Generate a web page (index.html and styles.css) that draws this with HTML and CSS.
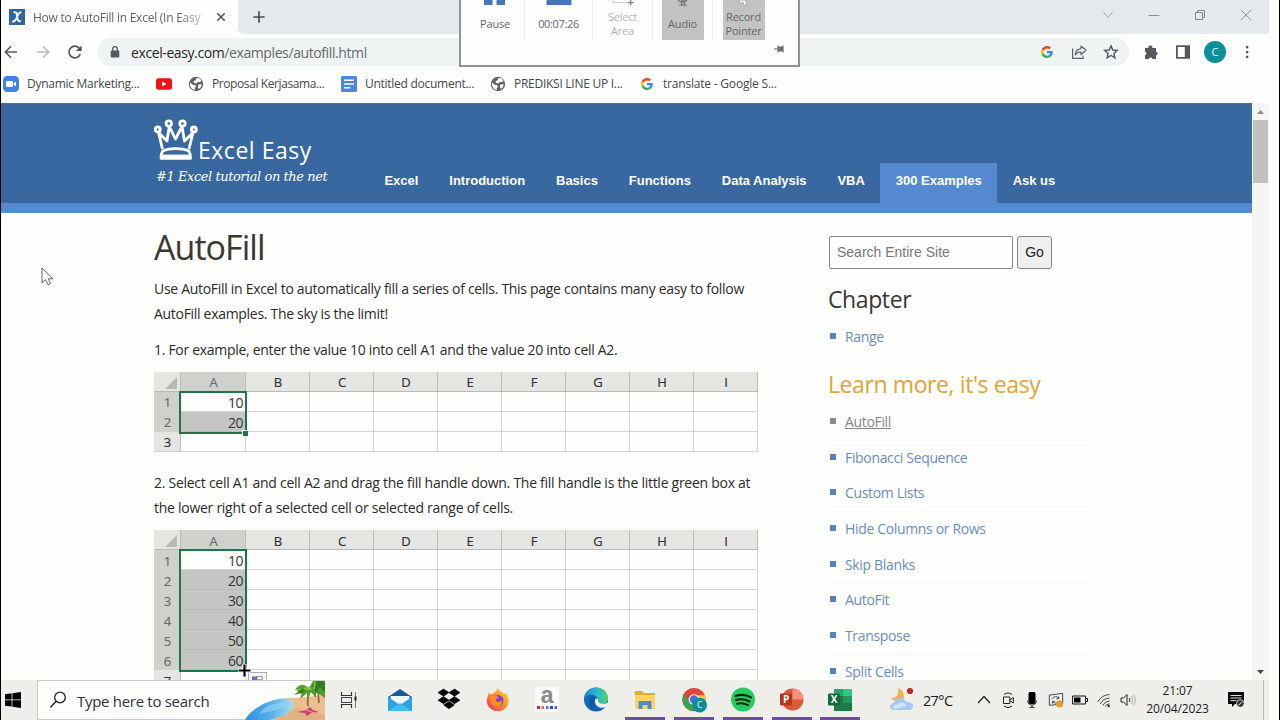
FILE: index.html
```html
<!DOCTYPE html>
<html lang="en">
<head>
<meta charset="utf-8">
<title>How to AutoFill in Excel</title>
<link rel="stylesheet" href="styles.css">
</head>
<body>
<svg width="0" height="0" class="defs">
  <symbol id="google" viewBox="0 0 48 48">
    <path fill="#ea4335" d="M24 9.5c3.5 0 6.700 1.200 9.200 3.600l6.900-6.900C35.900 2.400 30.500 0 24 0 14.600 0 6.500 5.400 2.600 13.200l8 6.200C12.400 13.700 17.700 9.500 24 9.500z"/>
    <path fill="#4285f4" d="M47 24.500c0-1.600-.2-3.100-.4-4.500H24v9h12.900c-.6 3-2.300 5.500-4.800 7.200l7.700 6C44.400 38 47 32 47 24.500z"/>
    <path fill="#fbbc05" d="M10.500 28.600A14.500 14.500 0 0 1 10.500 19.400l-8-6.200a24 24 0 0 0 0 21.600z"/>
    <path fill="#34a853" d="M24 48c6.500 0 11.900-2.100 15.900-5.800l-7.700-6c-2.200 1.500-4.900 2.300-8.200 2.300-6.300 0-11.600-4.200-13.500-9.900l-8 6.200C6.500 42.600 14.600 48 24 48z"/>
  </symbol>
  <symbol id="globe" viewBox="0 0 16 16">
    <circle cx="8" cy="8" r="7.200" fill="#5f6368"/>
    <path fill="#fdfdfb" d="M2 6.500l3 2.200 2.300.5.7 1.600-1.300 1.500.3 2L4 12.800 2 10zM8.500 2l3 .3 2 2.500-1.400 1.200L9.800 6 8.500 7.600 6.200 7 5.400 5.200l2.200-.9zM10 8.700l3.600-.8-.5 3-2.300 2.200-.8-1.700z"/>
  </symbol>
</svg>
<div class="screen">
  <header class="tabstrip">
    <div class="tab">
      <svg class="favicon" viewBox="0 0 16 16"><rect width="16" height="16" fill="#31669f"/><path d="M4.500 3.600c3-1.500 3.200.5 3.500 3.400.3 3.900 1 6 3.700 5M12.500 3.600c-2-1-3.500 2-4.500 4.400S5.300 13.500 3 12.300" fill="none" stroke="#fff" stroke-width="1.900"/></svg>
      <span class="tab-title">How to AutoFill in Excel (In Easy</span>
      <svg class="tab-close" viewBox="0 0 10 10"><path d="M1.300 1.300l7.400 7.400M8.700 1.300L1.300 8.700" stroke="#505357" stroke-width="1.600"/></svg>
    </div>
    <div class="tab-rest">
      <svg class="plus" viewBox="0 0 12 12"><path d="M6 .3v11.400M.3 6h11.400" stroke="#4b4e51" stroke-width="1.700"/></svg>
      <div class="window-buttons">
        <svg viewBox="0 0 12 12"><path d="M1.500 3.500L6 8.500l4.500-5" fill="none" stroke="#999c9e" stroke-width=".9"/></svg>
        <svg viewBox="0 0 12 12"><path d="M.5 6.500h11" stroke="#8d9092"/></svg>
        <svg viewBox="0 0 12 12"><path d="M1.500 3.500h7v7h-7zM3.500 3.500v-2h7v7h-2" fill="none" stroke="#85888a"/></svg>
        <svg viewBox="0 0 12 12"><path d="M.8 .8l10.400 10.400M11.200 .8L.8 11.200" stroke="#8c8f91" stroke-width=".9"/></svg>
      </div>
    </div>
  </header>
  <div class="toolbar">
    <div class="nav-buttons">
      <svg viewBox="0 0 16 16"><path d="M14 8H2.500M8 2.300L2.300 8 8 13.700" fill="none" stroke="#55585b" stroke-width="1.600"/></svg>
      <svg viewBox="0 0 16 16"><path d="M2 8h11.500M8 2.300L13.700 8 8 13.700" fill="none" stroke="#bcbebf" stroke-width="1.500"/></svg>
      <svg viewBox="0 0 16 16"><path d="M13.300 10A5.800 5.800 0 1 1 12.400 4.400L14 6" fill="none" stroke="#505357" stroke-width="1.700"/><path d="M14.600 1.500v5.600H9z" fill="#505357"/></svg>
    </div>
    <div class="omnibox">
      <svg class="lock" viewBox="0 0 10 12"><rect x=".7" y="4.600" width="8.600" height="7" rx="1" fill="#55585c"/><path d="M2.700 5V3a2.300 2.300 0 0 1 4.600 0v2" fill="none" stroke="#55585c" stroke-width="1.300"/></svg>
      <span class="url"><b>excel-easy.com</b>/examples/autofill.html</span>
      <div class="omni-icons">
        <svg viewBox="0 0 16 16"><use href="#google" x="2" y="2" width="12" height="12"/></svg>
        <svg viewBox="0 0 16 16"><path d="M1.600 4.500v9.900h10.500v-3" fill="none" stroke="#606366" stroke-width="1.200"/><path d="M10 2l5 4.300-5 4.200V8C7.500 7.900 5.600 8.800 4.200 11 4.600 7.300 6.800 5 10 4.600z" fill="none" stroke="#606366" stroke-width="1.200" stroke-linejoin="round"/></svg>
        <svg viewBox="0 0 16 16"><path d="M8 1.900l1.800 4.100 4.500.4-3.400 3 1 4.400L8 11.500l-3.900 2.300 1-4.400-3.400-3 4.500-.4z" fill="none" stroke="#55585c" stroke-width="1.400"/></svg>
      </div>
    </div>
    <div class="tool-icons">
      <svg viewBox="0 0 16 16"><path d="M2 4h3.400a2 2 0 1 1 3.900 0H13v3.600a2 2 0 0 1 0 3.900V15H9.500a2 2 0 0 0-3.800 0H2v-3.700a2 2 0 0 0 0-3.800z" fill="#55585c"/></svg>
      <svg viewBox="0 0 16 16"><path d="M1.900 2.200h12.200v11.600H1.900z" fill="#fff" stroke="#55585c" stroke-width="1.800"/><path d="M9.800 2h4.500v12H9.800z" fill="#55585c"/></svg>
      <span class="avatar">C</span>
      <svg viewBox="0 0 16 16"><path d="M7 2h2.300v2.300H7zM7 6.900h2.300v2.300H7zM7 11.700h2.300V14H7z" fill="#55585c"/></svg>
    </div>
  </div>
  <div class="bookmarks">
    <div class="bm bm1"><svg viewBox="0 0 16 16"><rect width="16" height="16" rx="4.500" fill="#3e82e4"/><rect x="3" y="5" width="7" height="6" rx="1.300" fill="#fff"/><path d="M10.600 7.300L13 5.500v5l-2.400-1.700z" fill="#fff"/></svg><span>Dynamic Marketing...</span></div>
    <div class="bm bm2"><svg viewBox="0 0 16 16"><rect y="2.300" width="16" height="11.500" rx="2.500" fill="#ec1414"/><path d="M6.200 5.500v5l4.300-2.500z" fill="#fff"/></svg></div>
    <div class="bm bm3"><svg><use href="#globe"/></svg><span>Proposal Kerjasama...</span></div>
    <div class="bm bm4"><svg viewBox="0 0 16 16"><rect width="16" height="16" rx="1.500" fill="#4a86dc"/><path d="M3 4.300h10M3 8h10M3 11.700h6.500" stroke="#fff" stroke-width="1.600"/></svg><span>Untitled document...</span></div>
    <div class="bm bm5"><svg><use href="#globe"/></svg><span>PREDIKSI LINE UP I...</span></div>
    <div class="bm bm6"><svg viewBox="0 0 16 16"><use href="#google" x="2" y="2" width="12" height="12"/></svg><span>translate - Google S...</span></div>
  </div>
  <div class="viewport">
    <main class="page">
      <div class="masthead">
        <div class="brand">
          <div class="brand-row">
            <svg class="crown" viewBox="0 0 44 42"><g fill="none" stroke="#fff" stroke-width="2.800" stroke-linejoin="round"><path d="M8.500 30L4.500 13.500l8.500 8.500 2.300-14.500L21.500 20 28 7.500 30.500 22l8.500-8.500L35 30"/><circle cx="3.800" cy="10.500" r="2.500"/><circle cx="14.800" cy="4.600" r="2.700"/><circle cx="28.500" cy="4.600" r="2.700"/><circle cx="39.800" cy="10.500" r="2.500"/><path d="M7 39.300h29.500c.3-3-.5-5.500-1.800-7.600-7-2.900-19-2.900-25.900 0C7.500 33.800 6.700 36.500 7 39.300z"/></g><path d="M7 35.600h29.500V40H7z" fill="#fff"/></svg>
            <span class="brand-name">Excel Easy</span>
          </div>
          <div class="tagline">#1 Excel tutorial on the net</div>
        </div>
        <nav class="menu"><a>Excel</a><a>Introduction</a><a>Basics</a><a>Functions</a><a>Data Analysis</a><a>VBA</a><a class="active">300 Examples</a><a>Ask us</a></nav>
      </div>
      <div class="columns">
        <article>
          <h1>AutoFill</h1>
          <p class="intro">Use AutoFill in Excel to automatically fill a series of cells. This page contains many easy to follow<br>AutoFill examples. The sky is the limit!</p>
          <p>1. For example, enter the value 10 into cell A1 and the value 20 into cell A2.</p>
          <div class="sheet" data-rows="3" data-filled="2"></div>
          <p class="after-sheet">2. Select cell A1 and cell A2 and drag the fill handle down. The fill handle is the little green box at<br>the lower right of a selected cell or selected range of cells.</p>
          <div class="sheet" data-rows="7" data-filled="6"></div>
        </article>
        <aside>
          <div class="search"><div class="search-input">Search Entire Site</div><div class="search-go">Go</div></div>
          <h2>Chapter</h2>
          <ul><li>Range</li></ul>
          <h2 class="orange">Learn more, it's easy</h2>
          <ul><li class="current"><u>AutoFill</u></li><li>Fibonacci Sequence</li><li>Custom Lists</li><li>Hide Columns or Rows</li><li>Skip Blanks</li><li>AutoFit</li><li>Transpose</li><li>Split Cells</li></ul>
        </aside>
      </div>
    </main>
    <div class="scrollbar">
      <svg viewBox="0 0 16 17"><path d="M4.500 11L8 7l3.500 4z" fill="#8a8a8a"/></svg>
      <div class="thumb"></div>
      <svg class="down" viewBox="0 0 16 17"><path d="M4.500 7L8 11l3.500-4z" fill="#444"/></svg>
    </div>
  </div>
  <footer class="taskbar">
    <div class="start"><svg viewBox="0 0 16 16"><path d="M0 2.300L6.600 1.300v6.200H0zM7.400 1.200L16 0v7.500H7.400zM0 8.300h6.600v6.300L0 13.700zM7.400 8.300H16V16l-8.600-1.200z" fill="#000"/></svg></div>
    <div class="task-search">
      <svg class="lens" viewBox="0 0 18 18"><circle cx="11" cy="6.500" r="5.300" fill="none" stroke="#222" stroke-width="1.300"/><path d="M7.200 10.300L1.300 16.500" stroke="#222" stroke-width="1.400"/></svg>
      <span>Type here to search</span>
      <svg class="beach" viewBox="0 0 80 39">
        <defs><linearGradient id="sea" x1="0" x2="1"><stop offset="0" stop-color="#2f8de0"/><stop offset=".6" stop-color="#5db5ef"/><stop offset="1" stop-color="#a8dcf3"/></linearGradient></defs>
        <path d="M0 39C12 26 28 16 50 17l30-3v25z" fill="#eabf92"/><path d="M22 39c14-1 22-6 30-13 8 5 16 3 28 8v5z" fill="#e2b184"/>
        <path d="M0 39C6 28 22 19 38 17.500c9-.8 12 5 9 10C43 34 32 37 24 39z" fill="url(#sea)"/><path d="M14 33c6-9 15-11 27-11-2 7-12 7-27 11z" fill="#9dd8f5" opacity=".55"/>
        <path d="M63 25c-1-7 0-12 2-18M74 22c-1-6-1-12 1-19" fill="none" stroke="#a06a35" stroke-width="1.800"/>
        <path d="M64 7c-5-5-11-3-14 2l6-1-7 6 8-2-2 6 7-6 1 6 3-7 5 6 0-6 9 6V0H68z" fill="#4d9e2c"/><path d="M67 4c3-4 8-5 13-3v10l-6-5-2 7zM52 9l10-1-6 5z" fill="#2f7d1c"/><path d="M60 5l5 3-6 0M70 1l-1 7" stroke="#8ccb45" stroke-width="1.600" fill="none"/>
        <path d="M52 31l9-2 4-3 3 3 6 2-8 1-4 3-2-3z" fill="#cf4563"/><path d="M61 29l9 3" stroke="#f09aaa"/>
      </svg>
    </div>
    <div class="apps">
      <div class="taskview"><svg viewBox="0 0 18 16"><path d="M1.500 0v3.500h10V0M1.500 16v-3.500h10V16" fill="none" stroke="#333" stroke-width="1.200"/><rect x="1.500" y="5.500" width="10" height="5" fill="none" stroke="#444"/><path d="M15.500 0v16" stroke="#777"/><path d="M14.500 4.500h2v4h-2z" fill="#222"/></svg></div>
      <div class="app"><svg viewBox="0 0 26 26"><path d="M1 10L13 2l12 8v2H1z" fill="#175a99"/><path d="M3.500 9h19v9h-19z" fill="#eef7fd"/><path d="M1 10l12 8 12-8v14H1z" fill="#2aa5e4"/><path d="M1 24l12-8 12 8z" fill="#43bdf1"/></svg></div>
      <div class="app"><svg viewBox="0 0 26 26"><path d="M7.500 2L13 5.600 7.500 9.200 2 5.600zM18.500 2L24 5.600l-5.500 3.600L13 5.600zM7.500 9.600l5.500 3.600-5.500 3.500L2 13.200zM18.500 9.600l5.500 3.600-5.500 3.500L13 13.200zM13 14.400l5.300 3.600L13 21.700 7.700 18z" fill="#050505" stroke="#050505" stroke-width=".6"/></svg></div>
      <div class="app"><svg viewBox="0 0 26 26"><defs><linearGradient id="fox" x1="1" x2="0" y1="0" y2="1"><stop stop-color="#ffdf35"/><stop offset=".5" stop-color="#ff8a2c"/><stop offset="1" stop-color="#ee2860"/></linearGradient></defs><path d="M4 5l1 3 4-2c2-2 3-2 4-5 1 3 4 4 7 6l1-1c6 9 1 18-8 18S-.5 16 3 9z" fill="url(#fox)"/><circle cx="13" cy="13.500" r="5.500" fill="#7947cf"/><path d="M5 9c4-2 7-1 9 2-2 0-4 1-3 3 2 2 4 1 6-1 1 6-6 9-11 3z" fill="#ff8b25"/></svg></div>
      <div class="app"><span class="amazon"><b>a</b><svg viewBox="0 0 22 3"><path d="M1 0h3v3H1z" fill="#913f34"/><path d="M5.500 0h2.500v3H5.500z" fill="#d66d43"/><path d="M10 0h2.500v3H10z" fill="#5a7abb"/><path d="M14 0h3v3h-3z" fill="#38538e"/><path d="M18.500 0h2.500v3h-2.500z" fill="#456fb0"/></svg></span></div>
      <div class="app"><svg viewBox="0 0 26 26"><defs><linearGradient id="edge" x1="0" x2="1"><stop stop-color="#1687d0"/><stop offset=".55" stop-color="#29b9ce"/><stop offset="1" stop-color="#59d35d"/></linearGradient></defs><circle cx="13" cy="12.500" r="12" fill="#1567b5"/><path d="M1 12C2-3 24-3 25 11c0 5-4 7-9 6-3-1 0-2-1-5-2-5-10-6-14 0z" fill="url(#edge)"/><path d="M12 13c-1 6 6 10 12 6.500l1.500-4C19 18.500 14 16 15 12c-1-1-2.500 0-3 1z" fill="#efefec"/><path d="M6 16c0-5 4-7 7-5-4 3-2 10 4 12-6 1-11-2-11-7z" fill="#0c58a8"/></svg></div>
      <div class="app open"><svg viewBox="0 0 26 26"><path d="M3 4h7l2 2h11v16H3z" fill="#e6a92e"/><path d="M3 8h20v14H3z" fill="#fbd566"/><path d="M6.500 14h13v8h-4v-4h-5v4h-4z" fill="#4a8ec9"/></svg></div>
      <div class="app open"><svg viewBox="0 0 28 28"><circle cx="14" cy="13.500" r="12.500" fill="#e3453a"/><path d="M3.200 7.300A12.500 12.500 0 0 0 13 26l5-9L9 16z" fill="#36a350"/><path d="M15 26A12.500 12.500 0 0 0 25.700 9H14l5 7z" fill="#f9c72d"/><circle cx="14" cy="13.500" r="5.800" fill="#fff"/><circle cx="14" cy="13.500" r="4.600" fill="#3478d8"/><circle cx="20" cy="19.500" r="8" fill="#118b9c"/><text x="17.200" y="22.800" font-size="9" fill="#fff">C</text></svg></div>
      <div class="app open"><svg viewBox="0 0 26 26"><circle cx="13" cy="12.500" r="12" fill="#24ce5e"/><path d="M5.500 9c5.500-1.800 11-1.200 15.500 1.400M6 13c5-1.500 9.500-.9 13.500 1.500M7 16.800c4-1 7.500-.6 11 1.300" fill="none" stroke="#102015" stroke-width="2.100" stroke-linecap="round"/></svg></div>
      <div class="app open"><svg viewBox="0 0 26 26"><circle cx="13.500" cy="12.500" r="11" fill="#db5a3c"/><path d="M13.500 1.500a11 11 0 0 1 11 11h-11z" fill="#f4937a"/><rect x="1" y="6.500" width="12" height="12" rx="1" fill="#b83519"/><text x="4" y="16" font-size="10" font-weight="bold" fill="#fff">P</text></svg></div>
      <div class="app open"><svg viewBox="0 0 26 26"><path d="M7 2h18v22H7z" fill="#1c7b48"/><path d="M7 2h9v7H7z" fill="#27a468"/><path d="M16 2h9v7h-9z" fill="#38c481"/><path d="M16 9h9v7h-9z" fill="#21985a"/><rect x="1" y="6.500" width="12" height="12" rx="1" fill="#12683b"/><text x="3.700" y="16" font-size="10" font-weight="bold" fill="#fff">X</text></svg></div>
    </div>
    <div class="tray">
      <div class="weather"><svg viewBox="0 0 26 26"><path d="M9 1c1 5 0 8-4 10H2c1 3 13 5 13-1 0-5-3-8-6-9z" fill="#f0b34a"/><circle cx="21" cy="4" r="3.100" fill="#b52e2a"/><path d="M5 23c-6 0-5-7 0-7 1-6 10-7 12-1 9-1 9 8 3 8z" fill="#a9c9ee"/><path d="M6 22c-4-2 0-5 3-4 2-4 7-3 8 1z" fill="#d3e3f7"/></svg><span>27°C</span></div>
      <div class="tray-icons">
        <svg viewBox="0 0 16 16"><path d="M2 11l6-6.500L14 11" fill="none" stroke="#222" stroke-width="1.200"/></svg>
        <svg viewBox="0 0 16 16"><path d="M3.500 5h6.300v6.500H3.500zM9.800 8l3.500-2.500v5.500L9.800 8.700M4 2.500c3-2 5-2 8 0M4 14c3 2 5 2 8 0" fill="none" stroke="#222"/></svg>
        <svg viewBox="0 0 16 16"><rect x="4.500" y="0" width="7" height="12" rx="1.500" fill="#000"/><path d="M3.500 8.500c0 6 9 6 9 0M8 13v3M5.500 15.500h5" fill="none" stroke="#333"/></svg>
        <svg viewBox="0 0 18 18"><path d="M1.500 3.500L16.500 1.500v12l-15 1.500zM5 8c1-3 5-4 7-1M12 5v2.500H9.500M12 10c-2 3-5 3-6.500 1M5 13v-2.500h2.500" fill="none" stroke="#333"/><circle cx="13" cy="13.500" r="4" fill="#e99b29"/></svg>
        <svg viewBox="0 0 16 16"><path d="M.6 4h13v8H.6zM14 6.500h1.500v3H14" fill="none" stroke="#111"/><path d="M2 5.500h6.500v5H2z" fill="#000"/></svg>
        <svg viewBox="0 0 16 16"><path d="M2 10C4 5.500 8 3 13.500 2.500M4.300 12C6 8.500 9 6.500 13.500 6M7 13.500c1-2.500 3-4 6.500-4.500M9.500 14.500c.7-1.500 2-2.500 4-2.500" fill="none" stroke="#444"/><circle cx="12.700" cy="14" r="1.200" fill="#333"/></svg>
        <svg viewBox="0 0 16 16"><path d="M1 6h2.500L7 2.500v11L3.500 10H1z" fill="none" stroke="#222"/><path d="M9 6c1 1 1 3 0 4" fill="none" stroke="#333"/><path d="M11 4c2 2 2 6 0 8M13 2.500c3 3 3 8 0 11" fill="none" stroke="#aaa"/></svg>
      </div>
      <div class="clock"><span>21:07</span><span>20/04/2023</span></div>
      <svg class="notify" viewBox="0 0 18 18"><path d="M1 1h16v12H8l-3 3v-3H1z" fill="#0a0a0a"/><path d="M3.500 4.500h11M3.500 7h11M3.500 9.700h6" stroke="#ddd"/><circle cx="13.300" cy="12.500" r="3.800" fill="#333" stroke="#eee" stroke-width=".8"/><path d="M11.500 14.300l3.600-3.600" stroke="#eee"/></svg>
      <div class="peek"></div>
    </div>
  </footer>
  <div class="recorder">
    <div class="rec-items">
      <div class="rec pause"><svg viewBox="0 0 22 6"><path d="M0 0h8.500v5H0zM12.500 0H21v5h-8.500z" fill="#4378b4"/></svg><span>Pause</span></div>
      <div class="rec time"><svg viewBox="0 0 26 6"><path d="M.5 0h25v5H.5z" fill="#4378b4"/></svg><span>00:07:26</span></div>
      <div class="rec area"><svg viewBox="0 0 26 7"><path d="M1.500 0v3h18" fill="none" stroke="#c4c4c2"/><path d="M22 0v6.500M18.500 3h7" stroke="#888" stroke-width="1.500"/></svg><span>Select<br>Area</span></div>
      <div class="rec audio"><div class="key"><svg viewBox="0 0 20 7"><path d="M9 0h3v6H9zM5 0c1 3 9 3 10 0M6 6h9" fill="none" stroke="#777" stroke-width="1.500"/></svg><span>Audio</span></div></div>
      <div class="rec pointer"><div class="key"><svg viewBox="0 0 20 7"><path d="M5 0v5l4-3 2 4.500 3-1L12 0z" fill="#fff" stroke="#888" stroke-width=".7"/></svg><span>Record<br>Pointer</span></div></div>
    </div>
    <svg class="pin" viewBox="0 0 10 8"><path d="M0 4h4M4 .5v7M4 2h4v4H4zM9 .5v7" fill="#777" stroke="#666" stroke-width="1.100"/></svg>
  </div>
  <svg class="cursor" viewBox="0 0 13 19"><path d="M1 1v15l3.500-3.300 2.500 5 2.500-1.200-2.300-4.700H12z" fill="#fff" stroke="#666"/></svg>
</div>
<script src="sheets.js"></script>
</body>
</html>
```
FILE: styles.css
```css
* { box-sizing: border-box; }
body { margin: 0; background: #fdfdfb; font-family: "Open Sans", "Noto Sans", sans-serif; color: #333; }
svg { display: block; flex: none; }
.defs { position: absolute; }
.screen { position: relative; width: 1280px; height: 720px; overflow: hidden; display: flex; flex-direction: column; padding-right: 10px; border-left: 1px solid #000; border-right: 1px solid #000; background: #fefefc; white-space: nowrap; }

.tabstrip { height: 34px; flex: none; display: flex; background: #fefefc; }
.tab { width: 237px; display: flex; align-items: center; padding-left: 8px; }
.favicon { width: 16px; height: 16px; }
.tab-title { width: 173px; margin-left: 8px; font-size: 12px; letter-spacing: -.25px; color: #606367; overflow: hidden; -webkit-mask-image: linear-gradient(90deg, #000 145px, rgba(0,0,0,.35) 170px); }
.tab-close { width: 10px; height: 10px; margin-left: 10px; }
.tab-rest { flex: 1; display: flex; justify-content: space-between; background: #e6e9eb; border-bottom-left-radius: 6px; }
.plus { width: 12px; height: 12px; margin: 11px 0 0 15px; }
.window-buttons { display: flex; gap: 34px; padding: 9px 17px 0 0; }
.window-buttons svg { width: 12px; height: 12px; }

.toolbar { height: 36px; flex: none; display: flex; align-items: center; }
.nav-buttons { width: 96px; display: flex; gap: 16px; padding-left: 2px; }
.nav-buttons svg { width: 16px; height: 16px; }
.omnibox { width: 1032px; height: 28px; border-radius: 14px; background: #f0f3f3; display: flex; align-items: center; padding-left: 13px; }
.lock { width: 10px; height: 12px; margin-top: -1px; }
.url { margin-left: 11px; font-size: 14px; color: #66696c; letter-spacing: -.4px; }
.url b { font-weight: 400; color: #25282b; }
.omni-icons { display: flex; gap: 16px; margin-left: auto; padding-right: 10px; }
.omni-icons svg { width: 16px; height: 16px; }
.tool-icons { display: flex; align-items: center; gap: 16px; padding-left: 14px; }
.tool-icons svg { width: 16px; height: 16px; }
.tool-icons svg:last-child { margin-left: -3px; }
.avatar { width: 22px; height: 22px; margin-left: -3px; border-radius: 50%; background: #0b8f9b; color: #e9ffff; font-size: 11px; line-height: 22px; text-align: center; }

.bookmarks { height: 33px; flex: none; display: flex; padding: 6px 0 0 2px; font-size: 12px; letter-spacing: -.27px; color: #45484b; }
.bm { height: 16px; display: flex; align-items: center; gap: 8px; }
.bm span { margin-top: -1px; }
.bm svg { width: 16px; height: 16px; }
.bm1 { width: 153px; }
.bm2 { width: 32px; }
.bm3 { width: 153px; letter-spacing: -.41px; }
.bm4 { width: 149px; }
.bm5 { width: 149px; }
.bm6 { letter-spacing: -.2px; }

.viewport { height: 577px; flex: none; display: flex; overflow: hidden; }
.page { width: 1251px; height: 577px; overflow: hidden; }
.masthead { height: 110px; display: flex; padding-left: 153px; border-top: 1px solid #526c8e; border-bottom: 10px solid #558ad0; background: #38689f; color: #fff; }
.brand { width: 215px; padding-top: 15px; }
.brand-row { display: flex; height: 43px; }
.crown { width: 44px; height: 42px; }
.brand-name { font-size: 23px; line-height: 36px; padding-top: 13px; letter-spacing: .52px; }
.tagline { padding: 6px 0 0 2px; font: italic 13px/18px "DejaVu Serif", serif; letter-spacing: -.44px; }
.menu { display: flex; align-self: flex-end; font: bold 13px/35px "Liberation Sans", Arial, sans-serif; }
.menu a { height: 40px; padding: 0 15.450px; }
.menu .active { background: #558ad0; }

.columns { display: flex; }
article { width: 674px; margin-left: 153px; }
h1 { margin: 0; padding-top: 11px; font-size: 34px; line-height: 46px; font-weight: 400; color: #393835; letter-spacing: -.95px; }
p { margin: 6px 0 0; padding-bottom: 5px; font-size: 14px; line-height: 24.800px; color: #2b2b29; letter-spacing: -.3px; }
p.intro { margin-top: 7px; }
p.after-sheet { margin-top: 19px; padding-bottom: 0; letter-spacing: -.27px; }
.sheet { position: relative; width: 604px; margin-top: 5px; display: grid; grid-template-columns: 27px 65px repeat(8, 64px); grid-template-rows: 20px; grid-auto-rows: 20px; font: 14px/21px "Open Sans", sans-serif; color: #333; }
.after-sheet + .sheet { margin-top: 9px; line-height: 22px; }
.sheet > div { border-right: 1px solid #d3d6d0; border-bottom: 1px solid #d3d6d0; }
.sheet .head { background: #e5e6e2; padding-left: 1px; text-align: center; border-color: #b9bbb7; font-size: 13px; -webkit-text-stroke: .2px; }
.sheet .head.on { background: #cfd1cd; color: #62706a; }
.sheet .row-head { border-bottom-color: #d0d2ce; }
.sheet .corner { padding: 5px 3px 0 0; }
.sheet .corner svg { margin-left: auto; width: 12px; height: 12px; }
.sheet .value { padding-right: 2px; text-align: right; letter-spacing: -.5px; }
.sheet .shade { background: #c5c6c3; border-bottom-color: #bbb; }
.sheet .selection { position: absolute; left: 25px; bottom: 18px; width: 68px; border: 2px solid #20734b; }
.sheet .handle { position: absolute; left: 88px; bottom: 16px; width: 6px; height: 6px; background: #20734b; border: 1px solid #fff; border-width: 1px 0 0 1px; }
.sheet .cross { position: absolute; left: 84px; top: 134px; width: 13px; height: 13px; }
.sheet .fill-options { position: absolute; left: 94px; top: 142px; width: 19px; height: 14px; background: #f7f7f5; border: 1px solid #aaa; }

aside { width: 260px; padding-top: 23px; }
.search { display: flex; gap: 4px; margin-left: 1px; font: 14px/31px "Liberation Sans", Arial, sans-serif; }
.search-input { width: 184px; height: 33px; border: 1px solid #858585; border-radius: 2px; padding-left: 7px; color: #777; }
.search-go { width: 35px; height: 33px; border: 1px solid #858585; border-radius: 3px; background: #efefed; text-align: center; color: #222; }
h2 { margin: 13px 0 4px; font-size: 23px; line-height: 34px; font-weight: 400; color: #393835; letter-spacing: -.4px; }
h2.orange { margin: 11.500px 0 3.800px; color: #e2a337; }
ul { list-style: none; margin: 0; padding: 0; font-size: 14px; letter-spacing: -.34px; }
li { height: 35.700px; line-height: 33px; display: flex; color: #6a8cc0; border-bottom: 1px solid #f8f8f5; }
li::before { content: ""; width: 6px; height: 6px; margin: 13px 9px 0 2px; background: #5683b8; flex: none; }
li.current { color: #858585; }
li.current::before { background: #8b8b89; }

.scrollbar { width: 17px; display: flex; flex-direction: column; background: #f5f5f3; }
.scrollbar svg { width: 17px; height: 17px; }
.scrollbar .thumb { width: 15px; height: 63px; margin-left: 1px; background: #c1c1bf; }
.scrollbar .down { margin-top: auto; }

.taskbar { height: 40px; flex: none; display: flex; background: #eeeeeb; color: #1e1e1e; }
.start { width: 36px; padding: 12px 0 0 4px; }
.start svg { width: 16px; height: 16px; }
.task-search { width: 288px; height: 40px; display: flex; align-items: center; border: 1px solid #c8c8c6; border-right: 0; background: #fdfdfc; font-size: 15px; color: #333; }
.lens { width: 18px; height: 18px; margin: 0 10px 0 11px; }
.task-search span { width: 168px; padding-top: 2px; letter-spacing: -.3px; }
.beach { width: 80px; height: 39px; }
.apps { display: flex; }
.taskview { width: 51px; padding: 12px 0 0 15px; }
.taskview svg { width: 18px; height: 16px; }
.app { width: 48.900px; display: flex; flex-direction: column; align-items: center; padding-top: 7px; height: 40px; font-family: "Open Sans", sans-serif; }
.app > svg { width: 26px; height: 26px; }
.app.open { background: linear-gradient(#6b4f9b, #6b4f9b) center bottom / 40px 3px no-repeat; }
.amazon { width: 24px; height: 25px; background: #fafaf9; display: flex; flex-direction: column; align-items: center; }
.amazon b { font: bold 23px/17px "Liberation Sans", sans-serif; color: #888; height: 19px; }
.amazon svg { width: 22px; height: 3px; }
.tray { flex: 1; display: flex; }
.weather { width: 111.500px; padding: 7px 0 0 24px; display: flex; gap: 8px; font-size: 14.500px; line-height: 28px; letter-spacing: -.6px; }
.weather svg { width: 26px; height: 26px; }
.tray-icons { width: 166px; display: flex; gap: 8px; padding-top: 12px; }
.tray-icons svg { width: 16px; height: 16px; }
.clock { width: 64px; margin-left: 3px; display: flex; flex-direction: column; align-items: center; padding-top: 2px; font-size: 12px; line-height: 18px; letter-spacing: -.12px; }
.notify { width: 18px; height: 18px; margin: 11px 0 0 18px; }
.peek { width: 1px; height: 40px; margin-left: 18px; background: #bbb; }

.recorder { position: absolute; left: 458px; top: 0; width: 341px; height: 67px; background: #fdfdfb; border: solid #929292; border-width: 0 2px 2px; }
.rec-items { display: flex; height: 40px; font-size: 11px; line-height: 14px; color: #666; text-align: center; }
.rec { display: flex; flex-direction: column; align-items: center; border-right: 1px solid #eeeeec; }
.rec svg { height: 6px; }
.rec span { letter-spacing: -.2px; }
.pause { width: 64px; padding-left: 5px; }
.pause svg, .time svg, .area svg { width: 26px; }
.pause span, .time span { padding-top: 11px; }
.time { width: 68px; }
.time span { letter-spacing: -.35px; }
.area { width: 60px; color: #b5b5b3; }
.area span, .pointer span { padding-top: 4px; }
.audio { width: 60px; }
.pointer { width: 61px; border: 0; }
.key { width: 42px; height: 40px; background: #c3c3c1; display: flex; flex-direction: column; align-items: center; }
.audio .key span { padding-top: 11px; }
.pin { position: absolute; left: 313px; top: 45px; width: 10px; height: 8px; }
.cursor { position: absolute; left: 40px; top: 267px; width: 13px; height: 19px; }
```
FILE: sheets.js
```js
document.querySelectorAll('.sheet').forEach(function (sheet) {
  var rows = +sheet.dataset.rows, filled = +sheet.dataset.filled;
  var html = '<div class="head corner"><svg viewBox="0 0 12 12"><path d="M12 0v12H0z" fill="#b7b9b5"/></svg></div>';
  'ABCDEFGHI'.split('').forEach(function (c, i) {
    html += '<div class="head' + (i === 0 ? ' on' : '') + '">' + c + '</div>';
  });
  for (var r = 1; r <= rows; r++) {
    html += '<div class="head row-head' + (r <= filled ? ' on' : '') + '">' + r + '</div>';
    html += '<div class="value' + (r > 1 && r <= filled ? ' shade' : '') + '">' + (r <= filled ? r * 10 : '') + '</div>';
    for (var c = 1; c < 9; c++) html += '<div></div>';
  }
  html += '<span class="selection" style="height:' + (filled * 20 + 3) + 'px"></span>';
  if (filled === 2) {
    html += '<span class="handle"></span>';
  } else {
    html += '<svg class="fill-options" viewBox="0 0 19 14"><path d="M3 4h6v8H3z" fill="#587bc0"/><path d="M9 4h6v4H9z" fill="#fff" stroke="#777"/></svg>';
    html += '<svg class="cross" viewBox="0 0 13 13"><path d="M6.500 0v13M0 6.500h13" stroke="#fff" stroke-width="4"/><path d="M6.500 .5v12M.5 6.500h12" stroke="#000" stroke-width="2.200"/></svg>';
  }
  sheet.innerHTML = html;
});
```
